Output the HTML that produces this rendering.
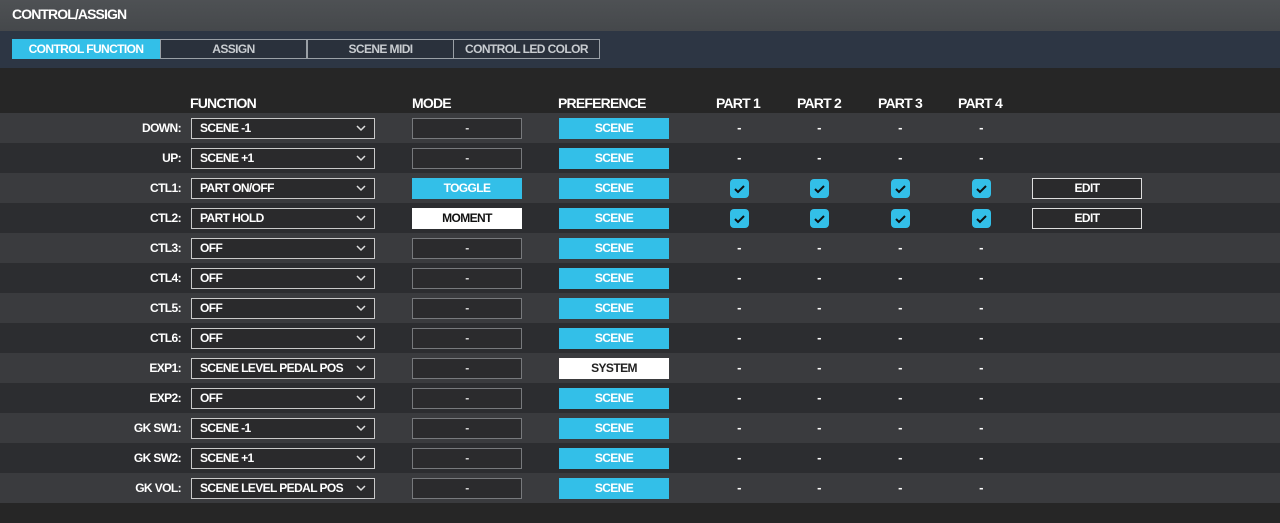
<!DOCTYPE html>
<html><head><meta charset="utf-8"><style>
*{margin:0;padding:0;box-sizing:border-box}
body{width:1280px;height:523px;background:#262626;font-family:"Liberation Sans",sans-serif;font-weight:bold;color:#fff;position:relative;overflow:hidden;font-size:12px;letter-spacing:-0.6px}
.a{position:absolute}
.title{left:0;top:0;width:1280px;height:31px;background:linear-gradient(#4e5154,#45484b);font-size:14px;padding:6px 0 0 12px;letter-spacing:-0.9px}
.tabs{left:0;top:31px;width:1280px;height:37px;background:#2d3644}
.tab{position:absolute;top:8px;height:20px;border:1px solid #9aa0a6;text-align:center;font-size:12px;line-height:18px;color:#c8ccd0;background:#2a313c}
.tab.on{background:#33bfe8;color:#fff;border-color:#33bfe8}
.hd{top:95px;font-size:14px;letter-spacing:-0.8px}
.row{position:absolute;left:0;width:1280px;height:30px}
.l{background:#3a3b3e}.d{background:#2c2d30}
.lab{position:absolute;right:1099px;top:8px;text-align:right}
.sel{position:absolute;left:191px;top:5px;width:184px;height:21px;border:1.5px solid #c9c9c9;background:#2a2a2c;padding:2px 0 0 8px}
.sel svg{position:absolute;right:8px;top:6px}
.mode{position:absolute;left:412px;top:5px;width:110px;height:21px;border:1.5px solid #77797c;background:#2b2b2d;text-align:center;line-height:18px;color:#ddd}
.mode.t{background:#33bfe8;border-color:#33bfe8;color:#fff}
.mode.m{background:#fff;border-color:#fff;color:#111}
.pref{position:absolute;left:559px;top:5px;width:110px;height:21px;background:#33bfe8;text-align:center;line-height:21px}
.pref.s{background:#fff;color:#222}
.p{position:absolute;top:7px;width:20px;text-align:center;margin-left:-10px;font-size:13px}
.cb{position:absolute;top:6px;width:19px;height:19px;margin-left:-9px;background:#33bfe8;border-radius:4px}
.edit{position:absolute;left:1032px;top:5px;width:110px;height:21px;border:1.5px solid #ddd;background:#2a2a2c;text-align:center;line-height:18px}
</style></head><body>
<div class="a title">CONTROL/ASSIGN</div>
<div class="a tabs">
<div class="tab on" style="left:12px;width:148px">CONTROL FUNCTION</div>
<div class="tab" style="left:160px;width:147px">ASSIGN</div>
<div class="tab" style="left:307px;width:147px">SCENE MIDI</div>
<div class="tab" style="left:453px;width:147px">CONTROL LED COLOR</div>
</div>
<div class="a hd" style="left:190px">FUNCTION</div>
<div class="a hd" style="left:412px">MODE</div>
<div class="a hd" style="left:558px">PREFERENCE</div>
<div class="a hd" style="left:716px">PART 1</div>
<div class="a hd" style="left:797px">PART 2</div>
<div class="a hd" style="left:878px">PART 3</div>
<div class="a hd" style="left:958px">PART 4</div>

<div class="row l" style="top:113px"><div class="lab">DOWN:</div><div class="sel">SCENE -1<svg width="10" height="7"><path d="M1 1l4 4 4-4" stroke="#ddd" stroke-width="1.5" fill="none"/></svg></div><div class="mode">-</div><div class="pref">SCENE</div><div class="p" style="left:739px">-</div><div class="p" style="left:819px">-</div><div class="p" style="left:900px">-</div><div class="p" style="left:981px">-</div></div>
<div class="row d" style="top:143px"><div class="lab">UP:</div><div class="sel">SCENE +1<svg width="10" height="7"><path d="M1 1l4 4 4-4" stroke="#ddd" stroke-width="1.5" fill="none"/></svg></div><div class="mode">-</div><div class="pref">SCENE</div><div class="p" style="left:739px">-</div><div class="p" style="left:819px">-</div><div class="p" style="left:900px">-</div><div class="p" style="left:981px">-</div></div>
<div class="row l" style="top:173px"><div class="lab">CTL1:</div><div class="sel">PART ON/OFF<svg width="10" height="7"><path d="M1 1l4 4 4-4" stroke="#ddd" stroke-width="1.5" fill="none"/></svg></div><div class="mode t">TOGGLE</div><div class="pref">SCENE</div>
<div class="cb" style="left:739px"><svg width="19" height="19"><path d="M5 10l3 3 6-6" stroke="#111" stroke-width="2" fill="none"/></svg></div><div class="cb" style="left:819px"><svg width="19" height="19"><path d="M5 10l3 3 6-6" stroke="#111" stroke-width="2" fill="none"/></svg></div><div class="cb" style="left:900px"><svg width="19" height="19"><path d="M5 10l3 3 6-6" stroke="#111" stroke-width="2" fill="none"/></svg></div><div class="cb" style="left:981px"><svg width="19" height="19"><path d="M5 10l3 3 6-6" stroke="#111" stroke-width="2" fill="none"/></svg></div><div class="edit">EDIT</div></div>
<div class="row d" style="top:203px"><div class="lab">CTL2:</div><div class="sel">PART HOLD<svg width="10" height="7"><path d="M1 1l4 4 4-4" stroke="#ddd" stroke-width="1.5" fill="none"/></svg></div><div class="mode m">MOMENT</div><div class="pref">SCENE</div>
<div class="cb" style="left:739px"><svg width="19" height="19"><path d="M5 10l3 3 6-6" stroke="#111" stroke-width="2" fill="none"/></svg></div><div class="cb" style="left:819px"><svg width="19" height="19"><path d="M5 10l3 3 6-6" stroke="#111" stroke-width="2" fill="none"/></svg></div><div class="cb" style="left:900px"><svg width="19" height="19"><path d="M5 10l3 3 6-6" stroke="#111" stroke-width="2" fill="none"/></svg></div><div class="cb" style="left:981px"><svg width="19" height="19"><path d="M5 10l3 3 6-6" stroke="#111" stroke-width="2" fill="none"/></svg></div><div class="edit">EDIT</div></div>
<div class="row l" style="top:233px"><div class="lab">CTL3:</div><div class="sel">OFF<svg width="10" height="7"><path d="M1 1l4 4 4-4" stroke="#ddd" stroke-width="1.5" fill="none"/></svg></div><div class="mode">-</div><div class="pref">SCENE</div><div class="p" style="left:739px">-</div><div class="p" style="left:819px">-</div><div class="p" style="left:900px">-</div><div class="p" style="left:981px">-</div></div>
<div class="row d" style="top:263px"><div class="lab">CTL4:</div><div class="sel">OFF<svg width="10" height="7"><path d="M1 1l4 4 4-4" stroke="#ddd" stroke-width="1.5" fill="none"/></svg></div><div class="mode">-</div><div class="pref">SCENE</div><div class="p" style="left:739px">-</div><div class="p" style="left:819px">-</div><div class="p" style="left:900px">-</div><div class="p" style="left:981px">-</div></div>
<div class="row l" style="top:293px"><div class="lab">CTL5:</div><div class="sel">OFF<svg width="10" height="7"><path d="M1 1l4 4 4-4" stroke="#ddd" stroke-width="1.5" fill="none"/></svg></div><div class="mode">-</div><div class="pref">SCENE</div><div class="p" style="left:739px">-</div><div class="p" style="left:819px">-</div><div class="p" style="left:900px">-</div><div class="p" style="left:981px">-</div></div>
<div class="row d" style="top:323px"><div class="lab">CTL6:</div><div class="sel">OFF<svg width="10" height="7"><path d="M1 1l4 4 4-4" stroke="#ddd" stroke-width="1.5" fill="none"/></svg></div><div class="mode">-</div><div class="pref">SCENE</div><div class="p" style="left:739px">-</div><div class="p" style="left:819px">-</div><div class="p" style="left:900px">-</div><div class="p" style="left:981px">-</div></div>
<div class="row l" style="top:353px"><div class="lab">EXP1:</div><div class="sel">SCENE LEVEL PEDAL POS<svg width="10" height="7"><path d="M1 1l4 4 4-4" stroke="#ddd" stroke-width="1.5" fill="none"/></svg></div><div class="mode">-</div><div class="pref s">SYSTEM</div><div class="p" style="left:739px">-</div><div class="p" style="left:819px">-</div><div class="p" style="left:900px">-</div><div class="p" style="left:981px">-</div></div>
<div class="row d" style="top:383px"><div class="lab">EXP2:</div><div class="sel">OFF<svg width="10" height="7"><path d="M1 1l4 4 4-4" stroke="#ddd" stroke-width="1.5" fill="none"/></svg></div><div class="mode">-</div><div class="pref">SCENE</div><div class="p" style="left:739px">-</div><div class="p" style="left:819px">-</div><div class="p" style="left:900px">-</div><div class="p" style="left:981px">-</div></div>
<div class="row l" style="top:413px"><div class="lab">GK SW1:</div><div class="sel">SCENE -1<svg width="10" height="7"><path d="M1 1l4 4 4-4" stroke="#ddd" stroke-width="1.5" fill="none"/></svg></div><div class="mode">-</div><div class="pref">SCENE</div><div class="p" style="left:739px">-</div><div class="p" style="left:819px">-</div><div class="p" style="left:900px">-</div><div class="p" style="left:981px">-</div></div>
<div class="row d" style="top:443px"><div class="lab">GK SW2:</div><div class="sel">SCENE +1<svg width="10" height="7"><path d="M1 1l4 4 4-4" stroke="#ddd" stroke-width="1.5" fill="none"/></svg></div><div class="mode">-</div><div class="pref">SCENE</div><div class="p" style="left:739px">-</div><div class="p" style="left:819px">-</div><div class="p" style="left:900px">-</div><div class="p" style="left:981px">-</div></div>
<div class="row l" style="top:473px"><div class="lab">GK VOL:</div><div class="sel">SCENE LEVEL PEDAL POS<svg width="10" height="7"><path d="M1 1l4 4 4-4" stroke="#ddd" stroke-width="1.5" fill="none"/></svg></div><div class="mode">-</div><div class="pref">SCENE</div><div class="p" style="left:739px">-</div><div class="p" style="left:819px">-</div><div class="p" style="left:900px">-</div><div class="p" style="left:981px">-</div></div>
</body></html>
